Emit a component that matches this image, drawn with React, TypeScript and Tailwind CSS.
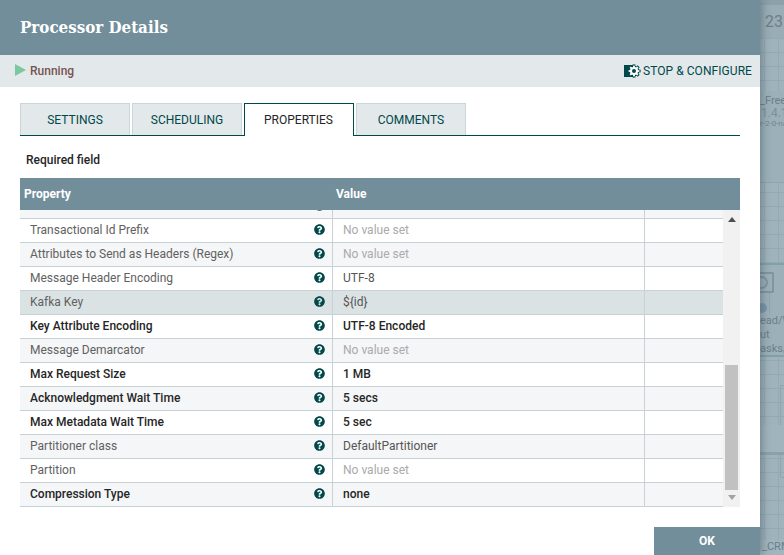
import { FaQuestionCircle } from 'react-icons/fa';

type Row = {
  name: string;
  value: string;
  bold?: boolean;
  unset?: boolean;
  selected?: boolean;
};

const rows: Row[] = [
  // scrolled almost out of view, only the tip of its help icon shows
  { name: '', value: '' },
  { name: 'Transactional Id Prefix', value: 'No value set', unset: true },
  { name: 'Attributes to Send as Headers (Regex)', value: 'No value set', unset: true },
  { name: 'Message Header Encoding', value: 'UTF-8' },
  { name: 'Kafka Key', value: '${id}', selected: true },
  { name: 'Key Attribute Encoding', value: 'UTF-8 Encoded', bold: true },
  { name: 'Message Demarcator', value: 'No value set', unset: true },
  { name: 'Max Request Size', value: '1 MB', bold: true },
  { name: 'Acknowledgment Wait Time', value: '5 secs', bold: true },
  { name: 'Max Metadata Wait Time', value: '5 sec', bold: true },
  { name: 'Partitioner class', value: 'DefaultPartitioner' },
  { name: 'Partition', value: 'No value set', unset: true },
  { name: 'Compression Type', value: 'none', bold: true },
];

const tabs = ['SETTINGS', 'SCHEDULING', 'PROPERTIES', 'COMMENTS'];

function ConfigureIcon() {
  return (
    <svg width="17" height="14" viewBox="0 0 17 14" className="shrink-0">
      <rect x="0" y="1" width="10" height="12" fill="#004849" />
      <g transform="translate(10 7)">
        {[0, 45, 90, 135].map((a) => (
          <rect key={a} x="-1.4" y="-6.6" width="2.8" height="13.2" fill="#004849" transform={`rotate(${a})`} />
        ))}
        <circle r="5.2" fill="#004849" />
        {[0, 45, 90, 135].map((a) => (
          <rect key={a} x="-0.9" y="-5.4" width="1.8" height="10.8" fill="#fff" transform={`rotate(${a})`} />
        ))}
        <circle r="4" fill="#fff" />
        <circle r="2" fill="#004849" />
      </g>
    </svg>
  );
}

function Canvas() {
  return (
    <div className="absolute inset-0 bg-[#9fb3bc] bg-[linear-gradient(#94a9b3_1px,transparent_1px),linear-gradient(90deg,#94a9b3_1px,transparent_1px)] bg-[size:14px_14px] bg-[position:8px_10px] text-[#6b7f89]">
      <div className="absolute left-[760px] top-0 h-[38px] w-[24px] overflow-hidden border-t-[5px] border-[#8ba1ab] bg-[#98adb6] pl-[5px] pt-[5px] text-[16px] leading-[24px] text-[#6e7f88]">
        23:
      </div>
      <div className="absolute left-[760px] top-[91px] h-[92px] w-[24px] overflow-hidden border-b border-[#8ea4ae] bg-[#9bb0b9] leading-none">
        <div className="mt-[4px] text-[11px] text-[#6d7f88] whitespace-nowrap">_Freer</div>
        <div className="mt-[1px] pl-[1px] text-[12px] text-[#7a919c] whitespace-nowrap">1.4.1.1</div>
        <div className="mt-[1px] text-[8px] text-[#72858f] whitespace-nowrap">r-2-0-na</div>
      </div>
      <div className="absolute left-[760px] top-[263px] h-[94px] w-[24px] overflow-hidden border-y-2 border-[#83a0a5] bg-[#9bb0b9] leading-none">
        <div className="absolute left-0 top-[7px] h-[21px] w-[14px] rounded-r-[2px] border-y-2 border-r-2 border-[#8195a0]" />
        <div className="absolute -left-[5px] top-[11px] h-[13px] w-[13px] rounded-full border-2 border-[#8195a0]" />
        <div className="absolute left-0 top-[28px] h-[20px] w-[10px] border-r border-[#90a5af]" />
        <div className="absolute -left-[3px] top-[38px] h-[10px] w-[10px] rounded-full bg-[#7c96a8]" />
        <div className="absolute left-0 top-[50px] text-[11px] whitespace-nowrap">ead/W</div>
        <div className="absolute left-0 top-[64px] text-[11px] whitespace-nowrap">ut</div>
        <div className="absolute left-0 top-[78px] text-[11px] whitespace-nowrap">asks/T</div>
      </div>
      <div className="absolute left-[780px] top-[385px] h-[40px] w-[4px] rounded-tl-[2px] border-l border-t border-[#90a5af]" />
      <div className="absolute left-[760px] top-[425px] h-[30px] w-[24px] border-b-[3px] border-[#8ba1aa] bg-[#a0b4bd]" />
      <div className="absolute left-[780px] top-[455px] h-[23px] w-[4px] rounded-bl-[2px] border-b border-l border-[#90a5af]" />
      <div className="absolute left-[760px] top-[540px] h-[15px] w-[24px] overflow-hidden bg-[#a2b5be] pl-[2px] text-[11px] leading-[14px] text-[#6a7f8b]">
        _CRM
      </div>
    </div>
  );
}

export default function App() {
  return (
    <div className="relative h-[555px] w-[784px] overflow-hidden font-['Roboto',sans-serif] text-[12px]">
      <Canvas />
      <div className="relative flex h-[555px] w-[760px] flex-col bg-white shadow-[2px_0_8px_rgba(50,70,80,0.45)]">
        <div className="flex h-[55px] items-center bg-[#728e9b] pl-[20px] font-['DejaVu_Serif_Condensed','DejaVu_Serif',serif] text-[16.8px] font-bold text-white [font-stretch:condensed]">
          Processor Details
        </div>

        <div className="flex h-[32px] items-center justify-between bg-[#e3e8eb] pl-[15px] pr-[8px]">
          <div className="flex items-center gap-[4px]">
            <svg width="11" height="12" viewBox="0 0 11 12" className="-mt-[2px]">
              <path d="M0 0 L11 6 L0 12 Z" fill="#7dc7a0" />
            </svg>
            <span className="font-medium text-[#775351]">Running</span>
          </div>
          <div className="flex items-center gap-[2px] text-[#004849]">
            <ConfigureIcon />
            <span className="tracking-[0.06px]">STOP &amp; CONFIGURE</span>
          </div>
        </div>

        <div className="mx-[20px] mt-[16px] flex h-[33px] gap-[2px] border-b border-[#004849]">
          {tabs.map((tab) =>
            tab === 'PROPERTIES' ? (
              <div
                key={tab}
                className="flex h-[33px] w-[110px] items-center justify-center border border-b-0 border-[#004849] bg-white pr-[1px] text-[#262626]"
              >
                {tab}
              </div>
            ) : (
              <div
                key={tab}
                className="flex h-[32px] w-[110px] items-center justify-center border border-b-0 border-[#cbd6da] bg-[#e3e8eb] text-[#004849]"
              >
                {tab}
              </div>
            ),
          )}
        </div>

        <div className="mt-[16px] h-[16px] pl-[26px] font-medium leading-[16px] text-[#262626]">Required field</div>

        <div className="mx-[20px] mt-[10px]">
          <div className="flex h-[32px] items-center bg-[#728e9b] font-bold text-white">
            <div className="w-[312px] pl-[4px]">Property</div>
            <div className="pl-[4px]">Value</div>
          </div>

          <div className="flex h-[297px]">
            <div className="w-[703px] overflow-hidden">
              <div className="-mt-[15px]">
                {rows.map((row, i) => {
                  const bg = row.selected ? 'bg-[#dbe2e4]' : i % 2 === 0 ? 'bg-[#f4f6f7]' : 'bg-white';
                  const nameColor = row.bold ? 'font-medium text-[#262626]' : 'text-[#616161]';
                  const valueColor = row.unset
                    ? 'text-[#aaaaaa]'
                    : row.bold
                      ? 'font-medium text-[#262626]'
                      : 'text-[#555555]';
                  return (
                    <div key={i} className={`flex h-[24px] border-b border-[#c7d2d7] ${bg}`}>
                      <div className={`flex w-[312px] items-center justify-between pb-[2px] pl-[10px] pr-[7px] ${nameColor}`}>
                        <span>{row.name}</span>
                        <FaQuestionCircle className="text-[#004849]" size={11} />
                      </div>
                      <div className={`flex w-[312px] items-center border-l border-[#c7d2d7] pb-[2px] pl-[10px] ${valueColor}`}>
                        {row.value}
                      </div>
                      <div className="grow border-l border-[#c7d2d7]" />
                    </div>
                  );
                })}
              </div>
            </div>

            <div className="flex w-[17px] flex-col items-center bg-[#f1f1f1]">
              <svg width="8" height="5" viewBox="0 0 8 5" className="mt-[7px]">
                <path d="M0 5 L4 0 L8 5 Z" fill="#505050" />
              </svg>
              <div className="mt-[143px] h-[125px] w-[13px] bg-[#c1c1c1]" />
              <svg width="8" height="5" viewBox="0 0 8 5" className="mt-[5px]">
                <path d="M0 0 L8 0 L4 5 Z" fill="#a3a3a3" />
              </svg>
            </div>
          </div>
        </div>

        <div className="mt-auto flex justify-end">
          <div className="flex h-[28px] w-[106px] items-center justify-center bg-[#728e9b] font-bold text-white">OK</div>
        </div>
      </div>
    </div>
  );
}
